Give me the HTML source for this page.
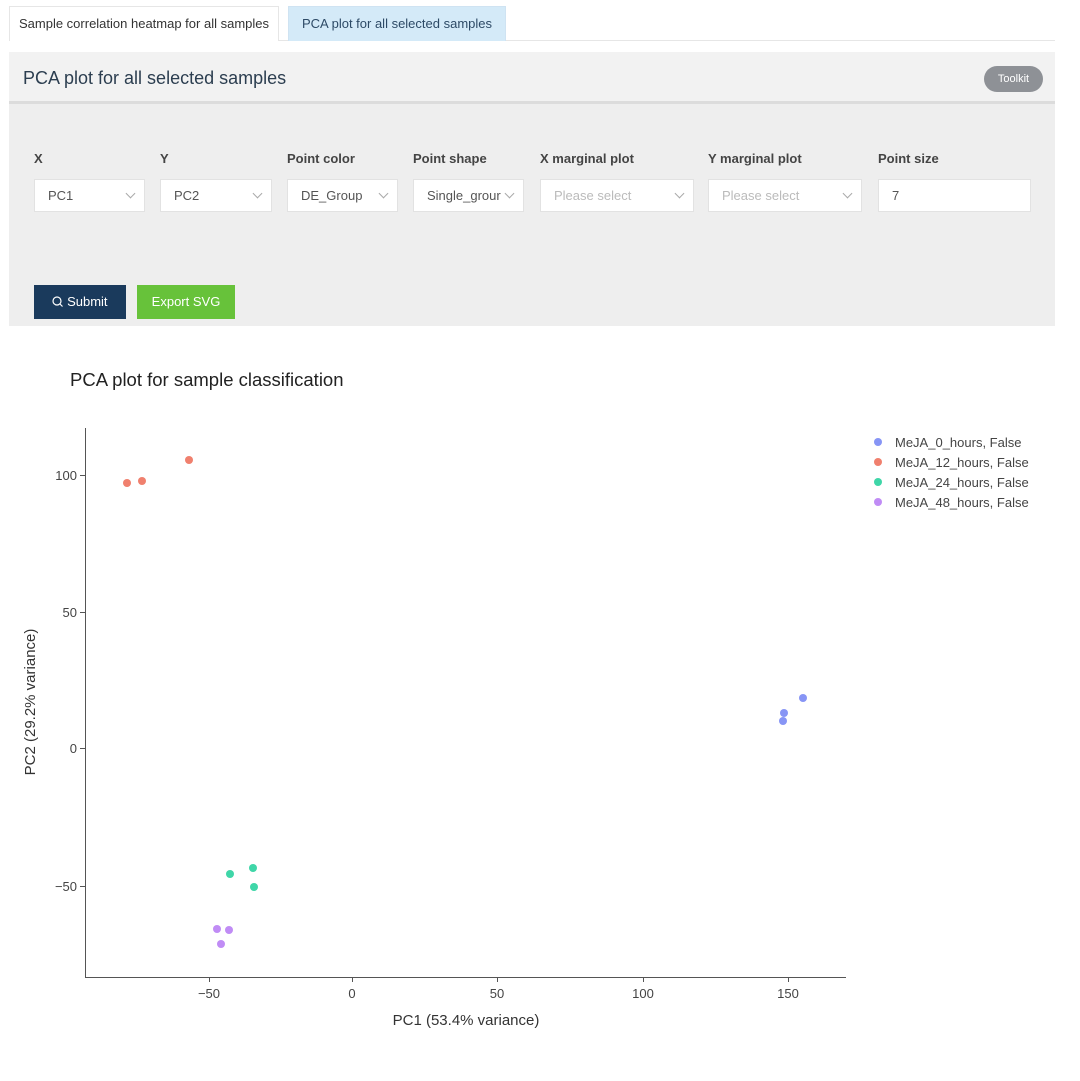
<!DOCTYPE html>
<html><head><meta charset="utf-8"><style>
*{box-sizing:border-box;margin:0;padding:0}
body{width:1080px;height:1081px;background:#fff;font-family:"Liberation Sans","DejaVu Sans",sans-serif;position:relative;overflow:hidden;color:#333}
.tabs{position:absolute;left:9px;top:6px;width:1046px;height:35px;border-bottom:1px solid #e6e6e6}
.tab{position:absolute;top:0;height:35px;line-height:34px;font-size:13px;text-align:center;color:#333}
.t1{left:0;width:270px;border:1px solid #e6e6e6;border-bottom:none;background:#fff}
.t2{left:279px;width:218px;background:#d4eaf8;border:1px solid #cfe3f2;border-bottom:none;color:#2d4a66}
.panel{position:absolute;left:9px;top:52px;width:1046px;height:274px;background:#eeeeee}
.hdr{height:52px;background:#f2f2f2;border-bottom:3px solid #dcdcdc;position:relative}
.hdr h1{position:absolute;left:14px;top:16px;font-size:18px;font-weight:normal;color:#2c3e50}
.tool{position:absolute;right:12px;top:14px;width:59px;height:26px;border-radius:13px;background:#8e9196;color:#fff;font-size:11px;text-align:center;line-height:26px}
.lbl{position:absolute;top:99px;font-size:13px;font-weight:bold;color:#444}
.sel{position:absolute;top:127px;height:33px;background:#fff;border:1px solid #e2e2e2;font-size:13px;color:#555;line-height:31px;padding-left:13px}
.sel.ph{color:#bbb}
.sel .ar{position:absolute;right:10px;top:10px;width:7px;height:7px;border-right:1px solid #aaa;border-bottom:1px solid #aaa;transform:rotate(45deg)}
.btn{position:absolute;top:233px;height:34px;line-height:34px;color:#fff;font-size:13px;text-align:center}
</style></head><body>
<div class="tabs"><div class="tab t1">Sample correlation heatmap for all samples</div><div class="tab t2">PCA plot for all selected samples</div></div>
<div class="panel">
<div class="hdr"><h1>PCA plot for all selected samples</h1><div class="tool">Toolkit</div></div>
<div class="lbl" style="left:25px">X</div>
<div class="lbl" style="left:151px">Y</div>
<div class="lbl" style="left:278px">Point color</div>
<div class="lbl" style="left:404px">Point shape</div>
<div class="lbl" style="left:531px">X marginal plot</div>
<div class="lbl" style="left:699px">Y marginal plot</div>
<div class="lbl" style="left:869px">Point size</div>
<div class="sel" style="left:25px;width:111px">PC1<span class="ar"></span></div>
<div class="sel" style="left:151px;width:112px">PC2<span class="ar"></span></div>
<div class="sel" style="left:278px;width:111px">DE_Group<span class="ar"></span></div>
<div class="sel" style="left:404px;width:111px">Single_grour<span class="ar"></span></div>
<div class="sel ph" style="left:531px;width:154px">Please select<span class="ar"></span></div>
<div class="sel ph" style="left:699px;width:154px">Please select<span class="ar"></span></div>
<div class="sel" style="left:869px;width:153px">7</div>
<div class="btn" style="left:25px;width:92px;background:#1a3a5c"><svg width="11" height="11" viewBox="0 0 11 11" style="vertical-align:-1px"><circle cx="5" cy="5" r="4" fill="none" stroke="#fff" stroke-width="1.2"/><path d="M8 8l2.5 2.5" stroke="#fff" stroke-width="1.2"/></svg> Submit</div>
<div class="btn" style="left:128px;width:98px;background:#67c23a">Export SVG</div>
</div>
<svg style="position:absolute;left:0;top:0" width="1080" height="1081" font-family="Liberation Sans, sans-serif">
<text x="70" y="386" font-size="18.5" fill="#222">PCA plot for sample classification</text>
<g stroke="#555" stroke-width="1" fill="none">
<path d="M85.5 428V977.5H846"/>
<path d="M80 475.5h5M80 612.5h5M80 748.5h5M80 886.5h5"/>
<path d="M209.5 977v5M352.5 977v5M497.5 977v5M643.5 977v5M788.5 977v5"/>
</g>
<g font-size="13" fill="#444" text-anchor="end">
<text x="77" y="480">100</text><text x="77" y="617">50</text><text x="77" y="753">0</text><text x="77" y="891">−50</text>
</g>
<g font-size="13" fill="#444" text-anchor="middle">
<text x="209" y="998">−50</text><text x="352" y="998">0</text><text x="497" y="998">50</text><text x="643" y="998">100</text><text x="788" y="998">150</text>
</g>
<text x="466" y="1025" font-size="15" fill="#333" text-anchor="middle">PC1 (53.4% variance)</text>
<text transform="translate(35,702) rotate(-90)" font-size="15" fill="#333" text-anchor="middle">PC2 (29.2% variance)</text>
<g fill="#f0806e"><circle cx="127" cy="483" r="4"/><circle cx="142" cy="481" r="4"/><circle cx="189" cy="460" r="4"/></g>
<g fill="#8795f5"><circle cx="783" cy="721" r="4"/><circle cx="784" cy="713" r="4"/><circle cx="803" cy="698" r="4"/></g>
<g fill="#3fd6a8"><circle cx="230" cy="874" r="4"/><circle cx="253" cy="868" r="4"/><circle cx="254" cy="887" r="4"/></g>
<g fill="#c08cf5"><circle cx="217" cy="929" r="4"/><circle cx="229" cy="930" r="4"/><circle cx="221" cy="944" r="4"/></g>
<circle cx="878" cy="442" r="4" fill="#8795f5"/><circle cx="878" cy="462" r="4" fill="#f0806e"/>
<circle cx="878" cy="482" r="4" fill="#3fd6a8"/><circle cx="878" cy="502" r="4" fill="#c08cf5"/>
<g font-size="13" fill="#444">
<text x="895" y="447">MeJA_0_hours, False</text><text x="895" y="467">MeJA_12_hours, False</text>
<text x="895" y="487">MeJA_24_hours, False</text><text x="895" y="507">MeJA_48_hours, False</text>
</g>
</svg>
</body></html>
